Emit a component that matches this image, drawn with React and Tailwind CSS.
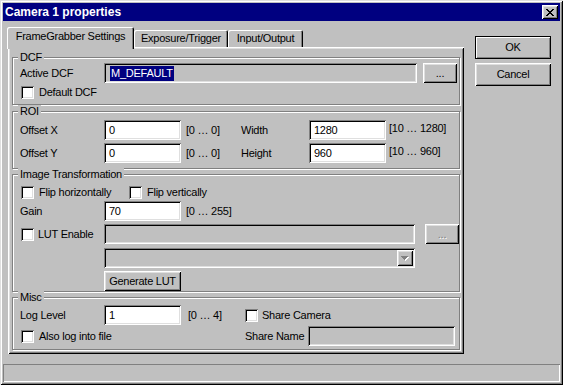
import React from 'react';

// classic 3D bevels
const raised = 'shadow-[inset_1px_1px_0_#fff,inset_-1px_-1px_0_#000,inset_2px_2px_0_#dfdfdf,inset_-2px_-2px_0_#808080]';
const sunken = 'shadow-[inset_1px_1px_0_#808080,inset_-1px_-1px_0_#fff,inset_2px_2px_0_#000,inset_-2px_-2px_0_#dfdfdf]';
const windowFrame = 'shadow-[inset_1px_1px_0_#dfdfdf,inset_-1px_-1px_0_#000,inset_2px_2px_0_#fff,inset_-2px_-2px_0_#808080]';

const CloseGlyph = () => (
  <svg width="8" height="7" viewBox="0 0 8 7" shapeRendering="crispEdges">
    <path
      fill="#000"
      d="M0 0h2v1H0zM6 0h2v1H6zM1 1h2v1H1zM5 1h2v1H5zM2 2h4v1H2zM3 3h2v1H3zM2 4h4v1H2zM1 5h2v1H1zM5 5h2v1H5zM0 6h2v1H0zM6 6h2v1H6z"
    />
  </svg>
);

const DownArrow = () => (
  <svg width="8" height="5" viewBox="0 0 8 5" shapeRendering="crispEdges">
    <path fill="#fff" d="M1 1h7v1H1zM2 2h5v1H2zM3 3h3v1H3zM4 4h1v1H4z" />
    <path fill="#808080" d="M0 0h7v1H0zM1 1h5v1H1zM2 2h3v1H2zM3 3h1v1H3z" />
  </svg>
);

const Button = ({ children, className = '', disabled }) => (
  <div
    className={`flex items-center justify-center bg-[#c0c0c0] ${raised} ${
      disabled ? 'text-[#808080] [text-shadow:1px_1px_0_#fff]' : 'text-black'
    } ${className}`}
  >
    {children}
  </div>
);

const Checkbox = ({ className = '' }) => (
  <div className={`w-[13px] h-[13px] shrink-0 bg-white ${sunken} ${className}`} />
);

const TextBox = ({ value, className = '', gray }) => (
  <div className={`flex items-center h-full pl-[5px] pt-px ${gray ? 'bg-[#c0c0c0]' : 'bg-white'} ${sunken} ${className}`}>
    {value}
  </div>
);

const GroupBox = ({ title, className = '', children }) => (
  <div className={`relative flex flex-col border border-[#808080] shadow-[inset_1px_1px_0_#fff,1px_1px_0_#fff] pl-[7px] ${className}`}>
    <span className="absolute -top-[7px] left-[5px] px-[2px] bg-[#c0c0c0] leading-[13px]">{title}</span>
    {children}
  </div>
);

const Tab = ({ label, active, className = '' }) => (
  <div
    className={`flex items-center justify-center bg-[#c0c0c0] rounded-t-[2px] shadow-[inset_1px_1px_0_#fff,inset_-1px_0_0_#000,inset_-2px_0_0_#808080] ${
      active ? 'relative z-10 h-[22px] -mb-[2px] pb-[3px]' : 'h-[17px]'
    } ${className}`}
  >
    {label}
  </div>
);

export default function App() {
  return (
    <div
      className={`w-[563px] h-[385px] bg-[#c0c0c0] p-[3px] flex flex-col text-black text-[11px] tracking-[-0.25px] font-['Liberation_Sans',Arial,sans-serif] select-none ${windowFrame}`}
    >
      {/* Title bar */}
      <div className="h-[18px] shrink-0 bg-[#000080] flex items-center justify-between pl-[2px] pr-[2px]">
        <span className="text-white font-bold text-[12px] tracking-[0px]">Camera 1 properties</span>
        <Button className="w-[16px] h-[14px]">
          <CloseGlyph />
        </Button>
      </div>

      {/* Body */}
      <div className="flex-1 flex">
        {/* Property sheet */}
        <div className="ml-[5px] w-[456px] flex flex-col">
          <div className="mt-[6px] h-[20px] flex items-end">
            <Tab label="FrameGrabber Settings" active className="w-[127px] -ml-px" />
            <Tab label="Exposure/Trigger" className="w-[94px]" />
            <Tab label="Input/Output" className="w-[75px]" />
          </div>

          <div className={`h-[307px] flex flex-col pt-[10px] px-[4px] ${raised}`}>
            <GroupBox title="DCF" className="h-[48px]">
              <div className="mt-[5px] h-[20px] flex items-center">
                <span className="w-[84px]">Active DCF</span>
                <div className={`w-[313px] h-full flex items-center bg-[#c0c0c0] ${sunken}`}>
                  <span className="ml-[6px] bg-[#000080] text-white px-px leading-[15px]">M_DEFAULT</span>
                </div>
                <Button className="ml-[6px] w-[34px] h-full">...</Button>
              </div>
              <div className="mt-[3px] h-[13px] flex items-center">
                <Checkbox className="ml-px" />
                <span className="ml-[5px]">Default DCF</span>
              </div>
            </GroupBox>

            <GroupBox title="ROI" className="mt-[6px] h-[58px]">
              <div className="mt-[8px] h-[20px] flex items-center">
                <span className="w-[84px]">Offset X</span>
                <TextBox value="0" className="w-[77px]" />
                <span className="ml-[5px] w-[55px]">[0 … 0]</span>
                <span className="w-[68px]">Width</span>
                <TextBox value="1280" className="w-[77px]" />
                <span className="ml-[3px] -mt-[3px]">[10 … 1280]</span>
              </div>
              <div className="mt-[3px] h-[20px] flex items-center">
                <span className="w-[84px]">Offset Y</span>
                <TextBox value="0" className="w-[77px]" />
                <span className="ml-[5px] w-[55px]">[0 … 0]</span>
                <span className="w-[68px]">Height</span>
                <TextBox value="960" className="w-[77px]" />
                <span className="ml-[3px] -mt-[3px]">[10 … 960]</span>
              </div>
            </GroupBox>

            <GroupBox title="Image Transformation" className="mt-[5px] h-[118px]">
              <div className="mt-[11px] h-[13px] flex items-center">
                <div className="ml-px w-[108px] flex items-center">
                  <Checkbox />
                  <span className="ml-[5px]">Flip horizontally</span>
                </div>
                <Checkbox />
                <span className="ml-[5px]">Flip vertically</span>
              </div>
              <div className="mt-[2px] h-[20px] flex items-center">
                <span className="w-[84px]">Gain</span>
                <TextBox value="70" className="w-[77px]" />
                <span className="ml-[5px]">[0 … 255]</span>
              </div>
              <div className="mt-[3px] h-[20px] flex items-center">
                <div className="ml-px w-[83px] flex items-center">
                  <Checkbox />
                  <span className="ml-[4px]">LUT Enable</span>
                </div>
                <TextBox gray className="w-[311px]" />
                <Button disabled className="ml-[10px] w-[34px] h-full">...</Button>
              </div>
              <div className="mt-[4px] h-[20px] flex items-center">
                <div className={`ml-[84px] w-[311px] h-full flex justify-end p-[2px] bg-[#c0c0c0] ${sunken}`}>
                  <Button className="w-[16px] h-full">
                    <DownArrow />
                  </Button>
                </div>
              </div>
              <div className="mt-[3px] h-[20px] flex items-center">
                <Button className="ml-[84px] w-[77px] h-full">Generate LUT</Button>
              </div>
            </GroupBox>

            <GroupBox title="Misc" className="mt-[5px] h-[53px]">
              <div className="mt-[7px] h-[20px] flex items-center">
                <span className="w-[84px]">Log Level</span>
                <TextBox value="1" className="w-[77px]" />
                <span className="ml-[7px] w-[57px]">[0 … 4]</span>
                <Checkbox />
                <span className="ml-[4px]">Share Camera</span>
              </div>
              <div className="mt-px h-[20px] flex items-center">
                <div className="ml-px w-[224px] flex items-center">
                  <Checkbox />
                  <span className="ml-[5px]">Also log into file</span>
                </div>
                <span className="w-[63px]">Share Name</span>
                <TextBox gray className="w-[147px]" />
              </div>
            </GroupBox>
          </div>
        </div>

        {/* Dialog buttons */}
        <div className="ml-[11px] mt-[15px] flex flex-col gap-[4px]">
          <div className="w-[76px] h-[23px] border border-black">
            <Button className="w-full h-full shadow-[inset_1px_1px_0_#fff,inset_-1px_-1px_0_#808080]">OK</Button>
          </div>
          <Button className="w-[76px] h-[23px]">Cancel</Button>
        </div>
      </div>

      {/* Status bar */}
      <div className="h-[18px] shrink-0 shadow-[inset_1px_1px_0_#808080,inset_-1px_-1px_0_#fff]" />
    </div>
  );
}
